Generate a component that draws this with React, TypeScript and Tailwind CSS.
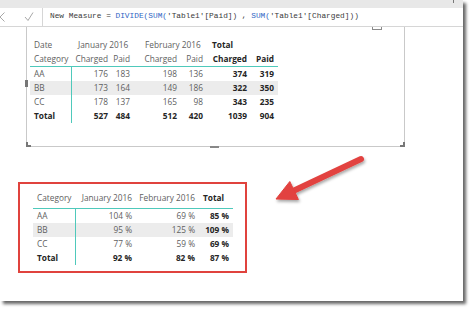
const teal = "border-[#4fc9bb]";

const topRows = [
  { cat: "AA", v: ["176", "183", "198", "136", "374", "319"] },
  { cat: "BB", v: ["173", "164", "149", "186", "322", "350"] },
  { cat: "CC", v: ["178", "137", "165", "98", "343", "235"] },
  { cat: "Total", v: ["527", "484", "512", "420", "1039", "904"] },
];

const pctRows = [
  { cat: "AA", v: ["104 %", "69 %", "85 %"] },
  { cat: "BB", v: ["95 %", "125 %", "109 %"] },
  { cat: "CC", v: ["77 %", "59 %", "69 %"] },
  { cat: "Total", v: ["92 %", "82 %", "87 %"] },
];

const FormulaBar = () => (
  <div className="flex h-[19px] border-b border-[#d6d6d6] bg-white">
    <div className="relative w-[42px] shrink-0">
      <svg width="42" height="18" viewBox="0 0 42 18" className="absolute left-0 top-0">
        <path d="M-4.5 4.5 L4.5 13.5 M-4.5 13.5 L4.5 4.5" stroke="#a8a8a8" strokeWidth="1" fill="none" />
        <path d="M25 9 L28 12.5 L33 4.5" stroke="#a8a8a8" strokeWidth="1" fill="none" />
      </svg>
    </div>
    <div className="flex flex-1 items-center border-l border-[#d6d6d6] pl-[7px] font-['Liberation_Mono',monospace] text-[7.8px] text-[#3a3a3a] whitespace-pre">
      <span>New Measure = </span>
      <span className="text-[#2f66c4]">DIVIDE(SUM(</span>
      <span>'Table1'[Paid]) , </span>
      <span className="text-[#2f66c4]">SUM(</span>
      <span>'Table1'[Charged]))</span>
    </div>
  </div>
);

const MatrixVisual = () => {
  const cols = "grid grid-cols-[42px_39px_22px_47px_26px_44px_28px]";
  const head = `h-[15px] leading-[14px] border-b ${teal}`;
  return (
    <div className="relative ml-[26px] h-[120px] w-[379px] border-x border-b border-[#c9c9c9] pl-[3px] pt-[11px]">
      <div className={`${cols} text-[#606060]`}>
        <div className="h-[14px] pl-[4px] leading-[14px]">Date</div>
        <div className="col-span-2 pl-[6px] leading-[14px]">January 2016</div>
        <div className="col-span-2 pl-[12px] leading-[14px]">February 2016</div>
        <div className="col-span-2 pl-[6px] font-bold leading-[14px] text-[#252525]">Total</div>

        <div className={`${head} pl-[4px]`}>Category</div>
        <div className={`${head} pr-[3px] text-right`}>Charged</div>
        <div className={`${head} pr-[3px] text-right`}>Paid</div>
        <div className={`${head} pr-[3px] text-right`}>Charged</div>
        <div className={`${head} pr-[3px] text-right`}>Paid</div>
        <div className={`${head} pr-[3px] text-right font-bold text-[#252525]`}>Charged</div>
        <div className={`${head} pr-[4px] text-right font-bold text-[#252525]`}>Paid</div>

        {topRows.map((r) => {
          const total = r.cat === "Total";
          const bg = r.cat === "BB" ? "bg-[#ececec]" : "";
          return [
            <div
              key={r.cat}
              className={`h-[14px] border-r ${teal} pl-[4px] leading-[14px] ${bg} ${total ? "font-bold text-[#252525]" : ""}`}
            >
              {r.cat}
            </div>,
            ...r.v.map((n, i) => (
              <div
                key={r.cat + i}
                className={`h-[14px] text-right leading-[14px] ${i === 5 ? "pr-[4px]" : "pr-[3px]"} ${bg} ${
                  total || i > 3 ? "font-bold text-[#252525]" : ""
                }`}
              >
                {n}
              </div>
            )),
          ];
        })}
      </div>

      <div className="absolute left-[345px] top-0 h-[3px] w-[10px] border-x border-b border-[#8a8a8a]" />
      <div className="absolute left-[-2px] top-[53px] h-[7px] w-[3px] bg-[#777]" />
      <div className="absolute bottom-[-2px] left-[183px] h-[2px] w-[9px] bg-[#888]" />
      <div className="absolute bottom-[-1px] left-[-1px] h-[5px] w-[5px] border-b-2 border-l-2 border-[#777]" />
      <div className="absolute bottom-[-1px] right-[-1px] h-[5px] w-[5px] border-b-2 border-r-2 border-[#777]" />
    </div>
  );
};

const PercentVisual = () => {
  const cols = "grid grid-cols-[43px_58px_64px_35px]";
  const head = `h-[18px] leading-[14px] border-b ${teal}`;
  return (
    <div className="ml-[18px] mt-[35px] w-fit border-2 border-[#e0433d] pb-[6px] pl-[13px] pr-[12px] pt-[7px]">
      <div className={`${cols} text-[#606060]`}>
        <div className={`${head} pl-[4px]`}>Category</div>
        <div className={`${head} pr-[2px] text-right`}>January 2016</div>
        <div className={`${head} pr-[3px] text-right`}>February 2016</div>
        <div className={`${head} pl-[5px] font-bold text-[#252525]`}>Total</div>

        {pctRows.map((r) => {
          const total = r.cat === "Total";
          const bg = r.cat === "BB" ? "bg-[#ececec]" : "";
          const bold = total ? "font-bold text-[#252525]" : "";
          return [
            <div key={r.cat} className={`h-[14px] border-r ${teal} pl-[4px] leading-[14px] ${bg} ${bold}`}>
              {r.cat}
            </div>,
            <div key={r.cat + "j"} className={`h-[14px] pr-[2px] text-right leading-[14px] ${bg} ${bold}`}>
              {r.v[0]}
            </div>,
            <div key={r.cat + "f"} className={`h-[14px] pr-[3px] text-right leading-[14px] ${bg} ${bold}`}>
              {r.v[1]}
            </div>,
            <div key={r.cat + "t"} className={`h-[14px] pr-[4px] text-right font-bold leading-[14px] text-[#252525] ${bg}`}>
              {r.v[2]}
            </div>,
          ];
        })}
      </div>
    </div>
  );
};

export default function App() {
  return (
    <div className="relative h-[314px] w-[474px] overflow-hidden bg-white font-['Open_Sans',sans-serif] text-[8.3px]">
      <div className="h-[301px] w-[463px] bg-white shadow-[3px_3px_3px_rgba(0,0,0,0.6)]">
        <div className="flex h-[8px] justify-end bg-[#e8e8e8] pr-[9px]">
          <div className="h-[3px] w-[1px] bg-[#777]" />
        </div>
        <FormulaBar />
        <MatrixVisual />
        <PercentVisual />
      </div>

      <svg width="474" height="314" className="pointer-events-none absolute left-0 top-0">
        <defs>
          <filter id="sh" x="-20%" y="-20%" width="140%" height="140%">
            <feDropShadow dx="1" dy="2" stdDeviation="1.5" floodColor="#000" floodOpacity="0.35" />
          </filter>
        </defs>
        <g filter="url(#sh)" fill="#e2423f" stroke="#e2423f">
          <line x1="361" y1="159" x2="292" y2="191.5" strokeWidth="6" strokeLinecap="round" />
          <polygon points="276,199 289.8,181.5 298.4,199.5" strokeWidth="1" strokeLinejoin="round" />
        </g>
      </svg>
    </div>
  );
}
